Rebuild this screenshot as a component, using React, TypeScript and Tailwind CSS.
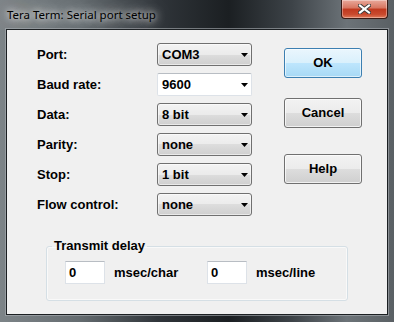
import React from "react";

const Arrow = () => (
  <svg width="7" height="4" viewBox="0 0 7 4" className="shrink-0">
    <path d="M0 0H7L3.5 4Z" fill="#000" />
  </svg>
);

function Combo({ value, editable }: { value: string; editable?: boolean }) {
  return (
    <div
      className={
        editable
          ? "h-[23px] flex items-center bg-white border border-[#dde2e8] border-t-[#b8bdc3] rounded-[2px] pl-[4px] pr-[3px]"
          : "h-[23px] flex items-center rounded-[3px] border border-[#707070] bg-[linear-gradient(#f3f3f3,#ebebeb_50%,#dddddd_50%,#cfcfcf)] shadow-[inset_0_0_0_1px_rgba(255,255,255,0.55)] pl-[4px] pr-[3px]"
      }
    >
      <span className="flex-1 leading-none">{value}</span>
      <Arrow />
    </div>
  );
}

function Btn({ label, primary }: { label: string; primary?: boolean }) {
  return (
    <div
      className={
        primary
          ? "h-[30px] w-[78px] flex items-center justify-center rounded-[3px] border border-[#3c7fb1] bg-[linear-gradient(#eaf6fd,#d9f0fc_50%,#bee6fd_50%,#a7d9f5)] shadow-[inset_0_0_0_1px_rgba(255,255,255,0.6)]"
          : "h-[30px] w-[78px] flex items-center justify-center rounded-[3px] border border-[#707070] bg-[linear-gradient(#f2f2f2,#ebebeb_50%,#dddddd_50%,#cfcfcf)] shadow-[inset_0_0_0_1px_rgba(255,255,255,0.7)]"
      }
    >
      {label}
    </div>
  );
}

const rows: { label: string; value: string; editable?: boolean }[] = [
  { label: "Port:", value: "COM3" },
  { label: "Baud rate:", value: "9600", editable: true },
  { label: "Data:", value: "8 bit" },
  { label: "Parity:", value: "none" },
  { label: "Stop:", value: "1 bit" },
  { label: "Flow control:", value: "none" },
];

export default function App() {
  return (
    <div className="w-[394px] h-[322px] flex flex-col bg-[linear-gradient(90deg,#7d8488_0%,#656c70_20%,#30353a_40%,#1b1f22_58%,#3d4348_74%,#6c7378_88%,#5a6064_100%)] overflow-hidden">
      {/* title bar */}
      <div className="h-[29px] flex items-start relative shrink-0">
        <div className="pl-[7px] pt-[7px] text-[11.5px] leading-[15px] text-black [font-family:'Noto_Sans',sans-serif] [text-shadow:0_0_6px_rgba(255,255,255,1),0_0_12px_rgba(255,255,255,0.9),0_0_20px_rgba(255,255,255,0.7)]">
          Tera Term: Serial port setup
        </div>
        <div className="absolute left-[341px] top-0 w-[47px] h-[19px] rounded-b-[4px] border border-t-0 border-[#3a1a14] bg-[linear-gradient(#e9a99b,#d7745f_45%,#c0381e_50%,#c94a2e_80%,#e07a5a)] shadow-[inset_0_0_0_1px_rgba(255,255,255,0.35)] flex items-center justify-center">
          <svg width="13" height="10" viewBox="0 0 13 10">
            <path d="M2 1.5L11 8.5M11 1.5L2 8.5" stroke="#3b3b3b" strokeWidth="4" strokeLinecap="square" />
            <path d="M2 1.5L11 8.5M11 1.5L2 8.5" stroke="#fff" strokeWidth="2.2" strokeLinecap="square" />
          </svg>
        </div>
      </div>
      {/* client */}
      <div className="mx-[6px] h-[286px] border border-[#1b1f22] shadow-[0_0_0_1px_rgba(170,175,180,0.6)] bg-[#f0f0f0] text-[13px] font-bold text-black [font-family:'Liberation_Sans',Arial,sans-serif]">
        <div className="flex pt-[13px] pl-[30px]">
          <div className="grid grid-cols-[120px_95px] auto-rows-[23px] gap-y-[7px] items-center">
            {rows.map((r) => (
              <React.Fragment key={r.label}>
                <div className="leading-none">{r.label}</div>
                <Combo value={r.value} editable={r.editable} />
              </React.Fragment>
            ))}
          </div>
          <div className="ml-[32px] mt-[5px] flex flex-col">
            <Btn label="OK" primary />
            <div className="mt-[20px]">
              <Btn label="Cancel" />
            </div>
            <div className="mt-[26px]">
              <Btn label="Help" />
            </div>
          </div>
        </div>
        <fieldset className="ml-[39px] mt-[22px] w-[302px] p-0 pb-[16px] m-0 border border-[#d5dfe5] rounded-[3px] shadow-[inset_0_0_0_1px_rgba(255,255,255,0.6)]">
          <legend className="ml-[5px] px-[2px] leading-[16px]">Transmit delay</legend>
          <div className="flex items-center mt-[7px] ml-[18px]">
            <div className="w-[40px] h-[23px] bg-white border border-[#dde2e8] border-t-[#b8bdc3] pl-[3px] flex items-center leading-none">0</div>
            <span className="ml-[9px] w-[93px] leading-none">msec/char</span>
            <div className="w-[40px] h-[23px] bg-white border border-[#dde2e8] border-t-[#b8bdc3] pl-[3px] flex items-center leading-none">0</div>
            <span className="ml-[9px] leading-none">msec/line</span>
          </div>
        </fieldset>
      </div>
    </div>
  );
}
